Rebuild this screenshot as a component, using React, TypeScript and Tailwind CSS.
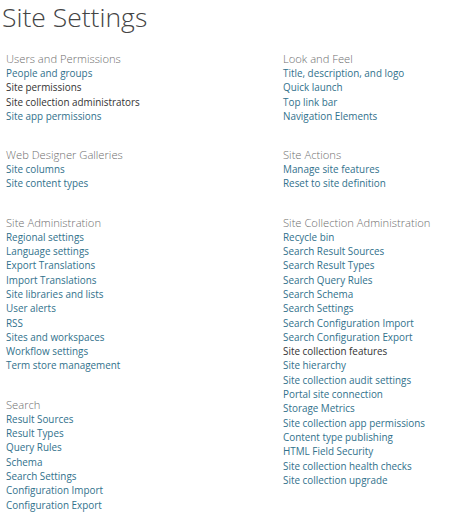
type Section = { title: string; links: { label: string; dark?: boolean }[] };

const left: Section[] = [
  {
    title: "Users and Permissions",
    links: [
      { label: "People and groups" },
      { label: "Site permissions", dark: true },
      { label: "Site collection administrators", dark: true },
      { label: "Site app permissions" },
    ],
  },
  {
    title: "Web Designer Galleries",
    links: [{ label: "Site columns" }, { label: "Site content types" }],
  },
  {
    title: "Site Administration",
    links: [
      { label: "Regional settings" },
      { label: "Language settings" },
      { label: "Export Translations" },
      { label: "Import Translations" },
      { label: "Site libraries and lists" },
      { label: "User alerts" },
      { label: "RSS" },
      { label: "Sites and workspaces" },
      { label: "Workflow settings" },
      { label: "Term store management" },
    ],
  },
  {
    title: "Search",
    links: [
      { label: "Result Sources" },
      { label: "Result Types" },
      { label: "Query Rules" },
      { label: "Schema" },
      { label: "Search Settings" },
      { label: "Configuration Import" },
      { label: "Configuration Export" },
    ],
  },
];

const right: Section[] = [
  {
    title: "Look and Feel",
    links: [
      { label: "Title, description, and logo" },
      { label: "Quick launch" },
      { label: "Top link bar" },
      { label: "Navigation Elements" },
    ],
  },
  {
    title: "Site Actions",
    links: [{ label: "Manage site features" }, { label: "Reset to site definition" }],
  },
  {
    title: "Site Collection Administration",
    links: [
      { label: "Recycle bin" },
      { label: "Search Result Sources" },
      { label: "Search Result Types" },
      { label: "Search Query Rules" },
      { label: "Search Schema" },
      { label: "Search Settings" },
      { label: "Search Configuration Import" },
      { label: "Search Configuration Export" },
      { label: "Site collection features", dark: true },
      { label: "Site hierarchy" },
      { label: "Site collection audit settings" },
      { label: "Portal site connection" },
      { label: "Storage Metrics" },
      { label: "Site collection app permissions" },
      { label: "Content type publishing" },
      { label: "HTML Field Security" },
      { label: "Site collection health checks" },
      { label: "Site collection upgrade" },
    ],
  },
];

const Column = ({ sections }: { sections: Section[] }) => (
  <div className="flex flex-col gap-[24px]">
    {sections.map((s) => (
      <div key={s.title}>
        <h2 className="text-[11.2px] leading-[15px] font-light text-[#6f6f6f]">{s.title}</h2>
        <ul>
          {s.links.map((l) => (
            <li key={l.label} className="text-[9.9px] leading-[14.3px]">
              <a href="#" className={l.dark ? "text-[#333]" : "text-[#31718c]"}>
                {l.label}
              </a>
            </li>
          ))}
        </ul>
      </div>
    ))}
  </div>
);

export default function App() {
  return (
    <div className="bg-white w-[474px] h-[514px] overflow-hidden font-['Open_Sans',sans-serif]">
      <h1 className="pl-[2px] pt-[1px] text-[26.5px] leading-[32px] font-light text-[#444]">Site Settings</h1>
      <div className="grid grid-cols-[277px_1fr] pl-[6px] pt-[18px]">
        <Column sections={left} />
        <Column sections={right} />
      </div>
    </div>
  );
}
